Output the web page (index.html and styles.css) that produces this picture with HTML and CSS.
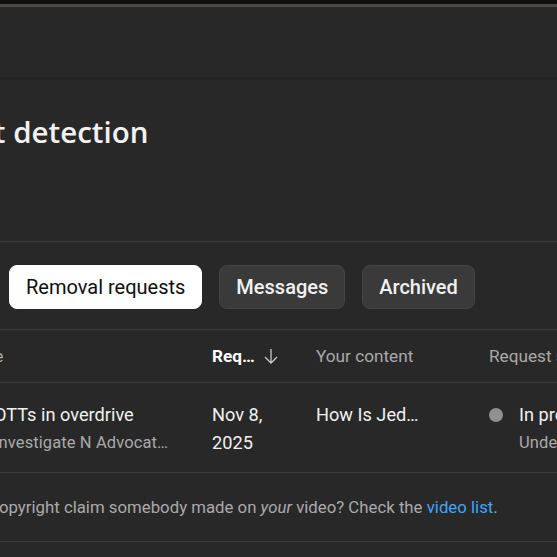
FILE: index.html
```html
<!DOCTYPE html>
<html lang="en">
<head>
    <meta charset="UTF-8">
    <meta name="viewport" content="width=device-width, initial-scale=1.0">
    <title>Content detection</title>
    <link rel="stylesheet" href="styles.css">
</head>
<body>

    <!-- Top app bar -->
    <div class="app-bar"></div>
    <div class="header-space"></div>

    <!-- Page title -->
    <div class="page-head">
        <h1>Content detection</h1>
    </div>

    <!-- Filter chips -->
    <div class="chips">
        <button class="chip active">Removal requests</button>
        <button class="chip">Messages</button>
        <button class="chip">Archived</button>
    </div>

    <!-- Requests table -->
    <div class="table">
        <div class="row head">
            <div class="cell">Title</div>
            <div class="cell sorted">
                <span>Req…</span>
                <svg width="16" height="17" viewBox="0 0 16 17"><path d="M8 1v14M2 9l6 6 6-6" fill="none" stroke="#c8c8c8" stroke-width="1.3"/></svg>
            </div>
            <div class="cell">Your content</div>
            <div class="cell">Request status</div>
        </div>
        <div class="row">
            <div class="cell video">
                <div class="name">OTTs in overdrive</div>
                <div class="sub">Investigate N Advocate Network</div>
            </div>
            <div class="cell">Nov 8,<br>2025</div>
            <div class="cell">How Is Jed…</div>
            <div class="cell status">
                <span class="dot"></span>
                <div>
                    <div class="name">In progress</div>
                    <div class="sub">Under review</div>
                </div>
            </div>
        </div>
    </div>

    <!-- Footer note -->
    <div class="note">
        <p>Looking for a copyright claim somebody made on <em>your</em> video? Check the <a href="#">video list</a>.</p>
    </div>

</body>
</html>
```

FILE: styles.css
```css
body {
    margin: 0;
    background-color: #282828;
    color: #f1f1f1;
    font-family: Roboto, "Liberation Sans", sans-serif;
    overflow: hidden;
}
.app-bar {
    height: 4px;
    background-color: #0f0f0f;
    border-bottom: 3px solid #4d4946;
}
.header-space {
    height: 70px;
    border-bottom: 3px solid #232323;
}
.page-head {
    height: 161px;
    border-bottom: 1px solid #3a3a3a;
}
.page-head h1 {
    margin: 0 0 0 -109px;
    padding-top: 31px;
    font-family: "Open Sans", sans-serif;
    font-weight: 600;
    font-size: 29.5px;
    white-space: nowrap;
}
.chips {
    display: flex;
    gap: 17px;
    height: 85px;
    padding: 2px 0 0 9px;
    align-items: center;
    border-bottom: 1px solid #3a3a3a;
}
.chip {
    height: 44px;
    padding: 0 16px;
    border: 1px solid #444;
    border-radius: 8px;
    background-color: #3a3a3a;
    color: #f1f1f1;
    font-family: Roboto, sans-serif;
    font-weight: 500;
    font-size: 20px;
}
.chip.active {
    background-color: #fff;
    border-color: #fff;
    color: #0f0f0f;
    font-weight: 400;
}
.table {
    margin-left: -30px;
    width: 700px;
}
.row {
    display: grid;
    grid-template-columns: 242px 104px 173px 1fr;
    border-bottom: 1px solid #3a3a3a;
    height: 89px;
    align-items: start;
    font-size: 18.2px;
    line-height: 28px;
}
.row .cell {
    padding-top: 18px;
    white-space: nowrap;
}
.row.head {
    height: 52px;
    align-items: center;
    font-size: 17.2px;
    color: #aaa;
}
.row.head .cell {
    padding-top: 0;
}
.sorted {
    display: flex;
    align-items: center;
    gap: 8px;
    color: #fff;
    font-weight: 700;
}
.video {
    padding-left: 24px;
    overflow: hidden;
}
.video .sub {
    width: 175px;
    overflow: hidden;
    text-overflow: ellipsis;
}
.sub {
    color: #aaa;
    font-size: 16.5px;
    letter-spacing: 0.1px;
}
.status {
    display: flex;
    gap: 16px;
}
.dot {
    width: 14px;
    height: 14px;
    margin-top: 7px;
    border-radius: 50%;
    background-color: #909090;
}
.note {
    height: 68px;
    border-bottom: 1px solid #3a3a3a;
    display: flex;
    align-items: center;
}
.note p {
    margin: 0 0 0 -112px;
    white-space: nowrap;
    color: #aaa;
    font-size: 16.8px;
}
.note a {
    color: #3ea6ff;
    text-decoration: none;
}
```
